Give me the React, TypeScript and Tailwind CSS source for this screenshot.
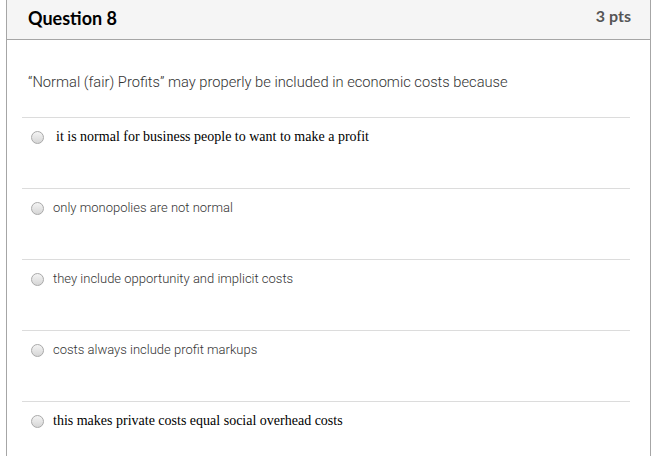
import React from "react";

const answers: { text: string; serif: boolean; gap: string }[] = [
  { text: "it is normal for business people to want to make a profit", serif: true, gap: "ml-[12px]" },
  { text: "only monopolies are not normal", serif: false, gap: "ml-[9px]" },
  { text: "they include opportunity and implicit costs", serif: false, gap: "ml-[9px]" },
  { text: "costs always include profit markups", serif: false, gap: "ml-[9px]" },
  { text: "this makes private costs equal social overhead costs", serif: true, gap: "ml-[9px]" },
];

function Radio() {
  return (
    <span className="inline-block w-[13px] h-[13px] rounded-full border border-[#a9a9a9] bg-gradient-to-b from-[#f4f4f4] to-[#d6d6d6] shrink-0" />
  );
}

export default function App() {
  return (
    <div className="w-[656px] h-[456px] bg-white overflow-hidden" style={{ fontFamily: "Lato, 'Liberation Sans', sans-serif" }}>
      <div className="ml-[6px] w-[645px] h-[470px] border-l border-r border-[#a6a6a6]">
        <div className="h-[40px] bg-[#f5f5f5] border-b border-[#a6a6a6] flex items-start justify-between pl-[21px] pr-[19px]">
          <span className="text-[18px] font-bold text-black mt-[6px] leading-[24px]">Question 8</span>
          <span className="text-[16px] font-bold text-[#555] mt-[5px] leading-[22px]">3 pts</span>
        </div>
        <div className="pl-[15px] pr-[20px]">
          <div
            className="pt-[32px] pb-[25px] pl-[6px] text-[14.7px] font-light text-[#333] leading-[20px]"
            style={{ fontFamily: "Roboto, 'Liberation Sans', sans-serif" }}
          >
            “Normal (fair) Profits” may properly be included in economic costs because
          </div>
          {answers.map((a, i) => (
            <div key={i} className="h-[71px] border-t border-[#dcdcdc] flex items-start pl-[9px] pt-[10px]">
              <div className="flex items-center h-[18px]">
                <Radio />
                {a.serif ? (
                  <span
                    className={`${a.gap} text-[14px] text-black leading-[18px]`}
                    style={{ fontFamily: "'Liberation Serif', serif" }}
                  >
                    {a.text}
                  </span>
                ) : (
                  <span
                    className={`${a.gap} text-[13px] font-light text-[#333] leading-[18px]`}
                    style={{ fontFamily: "Roboto, 'Liberation Sans', sans-serif" }}
                  >
                    {a.text}
                  </span>
                )}
              </div>
            </div>
          ))}
        </div>
      </div>
    </div>
  );
}
